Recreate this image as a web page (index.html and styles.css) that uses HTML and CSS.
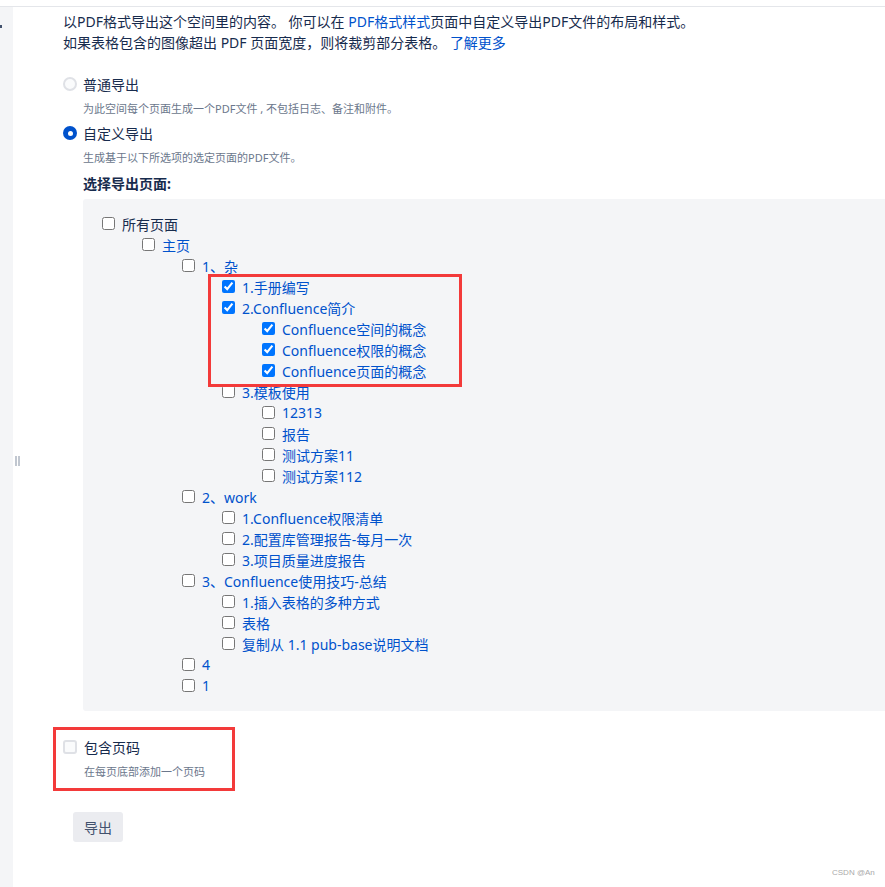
FILE: index.html
```html
<!DOCTYPE html>
<html lang="zh-CN">
    <head>
        <meta charset="UTF-8" />
        <meta name="viewport" content="width=device-width, initial-scale=1.0" />
        <title>导出空间</title>
        <link rel="stylesheet" href="styles.css">
    </head>
    <body>
        <div class="topline"></div>
        <div class="layout">
            <aside class="sidebar">
                <span class="sidebar-mark"></span>
            </aside>
            <span class="resize-handle"></span>

            <main class="content">
                <p class="intro">
                    以PDF格式导出这个空间里的内容。 你可以在 <a href="#">PDF格式样式</a>页面中自定义导出PDF文件的布局和样式。<br />
                    如果表格包含的图像超出 PDF 页面宽度，则将裁剪部分表格。 <a href="#">了解更多</a>
                </p>

                <div class="option">
                    <label class="option-label"><span class="radio"></span>普通导出</label>
                    <p class="option-desc">为此空间每个页面生成一个PDF文件 , 不包括日志、备注和附件。</p>
                </div>
                <div class="option">
                    <label class="option-label"><span class="radio checked"></span>自定义导出</label>
                    <p class="option-desc">生成基于以下所选项的选定页面的PDF文件。</p>
                </div>

                <h4 class="tree-title">选择导出页面:</h4>

                <!-- 页面树 -->
                <div class="tree-box">
                    <ul class="tree root">
                        <li>
                            <label class="row plain"><input type="checkbox" />所有页面</label>
                            <ul class="tree">
                                <li>
                                    <label class="row"><input type="checkbox" />主页</label>
                                    <ul class="tree">
                                        <li>
                                            <label class="row"><input type="checkbox" />1、杂</label>
                                            <ul class="tree">
                                                <li><label class="row"><input type="checkbox" checked />1.手册编写</label></li>
                                                <li>
                                                    <label class="row"><input type="checkbox" checked />2.Confluence简介</label>
                                                    <ul class="tree">
                                                        <li><label class="row"><input type="checkbox" checked />Confluence空间的概念</label></li>
                                                        <li><label class="row"><input type="checkbox" checked />Confluence权限的概念</label></li>
                                                        <li><label class="row"><input type="checkbox" checked />Confluence页面的概念</label></li>
                                                    </ul>
                                                </li>
                                                <li>
                                                    <label class="row"><input type="checkbox" />3.模板使用</label>
                                                    <ul class="tree">
                                                        <li><label class="row"><input type="checkbox" />12313</label></li>
                                                        <li><label class="row"><input type="checkbox" />报告</label></li>
                                                        <li><label class="row"><input type="checkbox" />测试方案11</label></li>
                                                        <li><label class="row"><input type="checkbox" />测试方案112</label></li>
                                                    </ul>
                                                </li>
                                            </ul>
                                        </li>
                                        <li>
                                            <label class="row"><input type="checkbox" />2、work</label>
                                            <ul class="tree">
                                                <li><label class="row"><input type="checkbox" />1.Confluence权限清单</label></li>
                                                <li><label class="row"><input type="checkbox" />2.配置库管理报告-每月一次</label></li>
                                                <li><label class="row"><input type="checkbox" />3.项目质量进度报告</label></li>
                                            </ul>
                                        </li>
                                        <li>
                                            <label class="row"><input type="checkbox" />3、Confluence使用技巧-总结</label>
                                            <ul class="tree">
                                                <li><label class="row"><input type="checkbox" />1.插入表格的多种方式</label></li>
                                                <li><label class="row"><input type="checkbox" />表格</label></li>
                                                <li><label class="row"><input type="checkbox" />复制从 1.1 pub-base说明文档</label></li>
                                            </ul>
                                        </li>
                                        <li><label class="row"><input type="checkbox" />4</label></li>
                                        <li><label class="row"><input type="checkbox" />1</label></li>
                                    </ul>
                                </li>
                            </ul>
                        </li>
                    </ul>
                </div>

                <div class="option page-number">
                    <label class="option-label"><span class="check-box"></span>包含页码</label>
                    <p class="option-desc">在每页底部添加一个页码</p>
                </div>

                <button class="export-btn">导出</button>
            </main>
        </div>

        <!-- 截图上的红框标注 -->
        <div class="mark mark-tree"></div>
        <div class="mark mark-page"></div>
        <span class="watermark">CSDN @An</span>
    </body>
</html>
```

FILE: styles.css
```css
html,
body {
    margin: 0;
    padding: 0;
    height: 100%;
}

body {
    position: relative;
    overflow: hidden;
    background: #fff;
    color: #172b4d;
    font-family: "Noto Sans", "Noto Sans CJK SC", sans-serif;
    font-size: 14px;
}

a {
    color: #0052cc;
    text-decoration: none;
}

.topline {
    height: 6px;
    border-bottom: 1px solid #e4e6ea;
}

.layout {
    display: flex;
    min-height: calc(100vh - 7px);
}

.sidebar {
    position: relative;
    flex: 0 0 13px;
    background: #f4f5f7;
}

.sidebar-mark {
    position: absolute;
    left: 0;
    top: 18px;
    width: 2px;
    height: 3px;
    background: #42526e;
}

.resize-handle {
    position: absolute;
    left: 15px;
    top: 456px;
    width: 2px;
    height: 10px;
    background: #c1c7d0;
    box-shadow: 3px 0 0 #c1c7d0;
}

.content {
    flex: 1;
    padding: 4px 0 0 50px;
}

.intro {
    margin: 0;
    line-height: 21px;
}

/* 导出方式 */
.option {
    margin-top: 21px;
}

.option + .option {
    margin-top: 6px;
}

.option-label {
    display: flex;
    align-items: center;
    height: 20px;
    gap: 6px;
}

.option-desc {
    margin: 7px 0 0 20px;
    font-size: 11px;
    line-height: 16px;
    color: #6b778c;
}

.radio {
    position: relative;
    box-sizing: border-box;
    width: 14px;
    height: 14px;
    border: 2px solid #dfe1e6;
    border-radius: 50%;
    background: #fafbfc;
}

.radio.checked {
    border: none;
    background: #0052cc;
}

.radio.checked::after {
    content: "";
    position: absolute;
    left: 4.5px;
    top: 4.5px;
    width: 5px;
    height: 5px;
    border-radius: 50%;
    background: #fff;
}

.tree-title {
    margin: 8px 0 0 20px;
    font-size: 14px;
    line-height: 20px;
    font-weight: bold;
}

/* 页面树 */
.tree-box {
    margin: 5px 0 0 20px;
    padding: 14px 0 15px 19px;
    background: #f4f5f7;
    border-radius: 3px 0 0 3px;
}

.tree {
    list-style: none;
    margin: 0;
    padding: 0 0 0 40px;
}

.tree.root {
    padding-left: 0;
}

.row {
    display: flex;
    align-items: center;
    height: 21px;
    color: #0052cc;
    white-space: nowrap;
}

.row.plain {
    color: #172b4d;
}

.row input {
    width: 13px;
    height: 13px;
    margin: 0 7px 0 0;
}

/* 包含页码 */
.page-number {
    margin-top: 26px;
}

.check-box {
    box-sizing: border-box;
    width: 14px;
    height: 14px;
    border: 2px solid #dfe1e6;
    border-radius: 3px;
    background: #fafbfc;
}

.page-number .option-label {
    gap: 7px;
}

.page-number .option-desc {
    margin-left: 21px;
}

.export-btn {
    display: block;
    margin: 32px 0 0 10px;
    width: 50px;
    height: 30px;
    padding: 0;
    border: none;
    border-radius: 3px;
    background: #ebecf0;
    color: #42526e;
    font-family: inherit;
    font-size: 14px;
}

.mark {
    position: absolute;
    border: 3px solid #f33a3a;
    box-sizing: border-box;
}

.mark-tree {
    left: 208px;
    top: 274px;
    width: 254px;
    height: 113px;
}

.mark-page {
    left: 53px;
    top: 727px;
    width: 182px;
    height: 64px;
}

.watermark {
    position: absolute;
    left: 832px;
    top: 868px;
    font-size: 8px;
    color: #aaa;
    font-family: "Liberation Sans", sans-serif;
}
```
